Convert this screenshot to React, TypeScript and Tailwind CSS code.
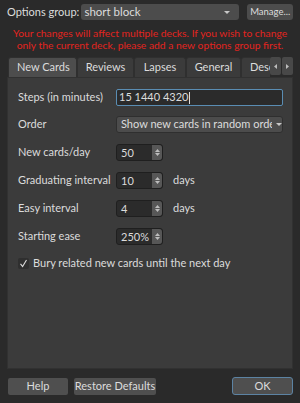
import React from 'react';

const font = { fontFamily: 'Lato, "Open Sans", sans-serif' };

const Spin: React.FC<{ value: string }> = ({ value }) => (
    <div className="flex h-[17px] w-[47px] rounded-[3px] border border-[#1f1f1f] bg-[#2b2b2b]">
        <div className="flex-1 pl-[4px] leading-[15px]">{value}</div>
        <div className="flex w-[10px] flex-col items-center justify-center gap-[1px] rounded-r-[3px] bg-[#575757]">
            <svg width="5" height="3" viewBox="0 0 5 3"><path d="M0 3 L2.5 0 L5 3Z" fill="#bdbdbd" /></svg>
            <svg width="5" height="3" viewBox="0 0 5 3"><path d="M0 0 L2.5 3 L5 0Z" fill="#bdbdbd" /></svg>
        </div>
    </div>
);

const Row: React.FC<{ label: string; children: React.ReactNode; className?: string }> = ({ label, children, className }) => (
    <div className={'flex h-[17px] items-center ' + (className ?? '')}>
        <div className="w-[98px] whitespace-nowrap">{label}</div>
        {children}
    </div>
);

const tabs = ['New Cards', 'Reviews', 'Lapses', 'General', 'Description'];
const tabWidths = ['w-[69px]', 'w-[57px]', 'w-[52px]', 'w-[55px]', 'w-[32px]'];

export default function App() {
    return (
        <div style={font} className="flex h-[403px] w-[300px] flex-col overflow-hidden whitespace-nowrap bg-[#2a2a2a] px-[7px] text-[11px] text-[#dcdcdc]">
            <div className="mt-[4px] flex h-[16px] items-center">
                <div className="w-[75px] text-[11px]">Options group:</div>
                <div className="flex h-[16px] w-[159px] items-center rounded-[3px] bg-[#4c4c4c] pl-[3px] text-[11.5px]">
                    <span className="flex-1">short block</span>
                    <svg className="mr-[9px]" width="6" height="3" viewBox="0 0 6 3"><path d="M0 0 L6 0 L3 3Z" fill="#c8c8c8" /></svg>
                </div>
                <div className="ml-[8px] flex h-[16px] w-[46px] items-center justify-center rounded-[3px] bg-[#4c4c4c] text-[9.5px]">Manage...</div>
            </div>

            <div className="mt-[7px] whitespace-normal text-center text-[10.3px] leading-[12px] text-[#e3241f]">
                Your changes will affect multiple decks. If you wish to change only the current deck, please add a new options group first.
            </div>

            <div className="mt-[6px] flex h-[20px] items-end">
                <div className="ml-[1px] flex overflow-hidden">
                    {tabs.map((t, i) => (
                        <div
                            key={t}
                            className={
                                'flex h-[20px] shrink-0 items-center overflow-hidden rounded-t-[3px] border border-b-0 border-[#2f2f2f] ' +
                                tabWidths[i] +
                                (i === 0 ? ' bg-[#4d4d4d] pl-[8px]' : i === 4 ? ' bg-[#3b3b3b] pl-[8px]' : ' bg-[#3b3b3b] justify-center')
                            }
                        >
                            {t}
                        </div>
                    ))}
                </div>
                <div className="mb-[2px] flex h-[18px] w-[11px] items-center justify-center rounded-[2px] bg-[#484848]">
                    <svg width="3" height="5" viewBox="0 0 3 5"><path d="M3 0 L0 2.5 L3 5Z" fill="#bdbdbd" /></svg>
                </div>
                <div className="mb-[2px] ml-[1px] flex h-[18px] w-[11px] items-center justify-center rounded-[2px] bg-[#484848]">
                    <svg width="3" height="5" viewBox="0 0 3 5"><path d="M0 0 L3 2.5 L0 5Z" fill="#bdbdbd" /></svg>
                </div>
            </div>

            <div className="flex h-[292px] flex-col border border-[#313131] bg-[#3b3b3b] pl-[10px] pr-[9px]">
                <Row label="Steps (in minutes)" className="mt-[11px]">
                    <div className="flex h-[17px] flex-1 items-center rounded-[2px] border border-[#5a8db3] bg-[#2b2b2b] pl-[2px]">
                        15 1440 4320<span className="ml-[1px] inline-block h-[12px] w-px bg-[#dcdcdc]" />
                    </div>
                </Row>
                <Row label="Order" className="mt-[10px]">
                    <div className="flex h-[17px] flex-1 items-center overflow-hidden rounded-[3px] border border-[#2f2f2f] bg-[#4c4c4c] pl-[4px]">
                        <span className="w-[151px] overflow-hidden">Show new cards in random order</span>
                        <svg className="ml-[4px]" width="6" height="3" viewBox="0 0 6 3"><path d="M0 0 L6 0 L3 3Z" fill="#c8c8c8" /></svg>
                    </div>
                </Row>
                <Row label="New cards/day" className="mt-[11px]">
                    <Spin value="50" />
                </Row>
                <Row label="Graduating interval" className="mt-[11px]">
                    <Spin value="10" />
                    <span className="ml-[10px]">days</span>
                </Row>
                <Row label="Easy interval" className="mt-[11px]">
                    <Spin value="4" />
                    <span className="ml-[10px]">days</span>
                </Row>
                <Row label="Starting ease" className="mt-[11px]">
                    <Spin value="250%" />
                </Row>
                <div className="mt-[10px] flex h-[17px] items-center">
                    <div className="flex h-[11px] w-[11px] items-center justify-center rounded-[2px] bg-[#2f2f2f]">
                        <svg width="9" height="9" viewBox="0 0 9 9"><path d="M1.5 4.8 L3.6 7.5 L7.5 1" fill="none" stroke="#dcdcdc" strokeWidth="1.1" /></svg>
                    </div>
                    <span className="ml-[4px]">Bury related new cards until the next day</span>
                </div>
            </div>

            <div className="mt-[8px] flex h-[18px] items-center">
                <div className="ml-[1px] flex h-[17px] w-[60px] items-center justify-center rounded-[2px] bg-[#4f4f4f]">Help</div>
                <div className="ml-[6px] flex h-[17px] w-[82px] items-center justify-center rounded-[2px] bg-[#4f4f4f]">Restore Defaults</div>
                <div className="ml-auto flex h-[18px] w-[61px] items-center justify-center rounded-[3px] border border-[#5c83a3] bg-[#4f4f4f]">OK</div>
            </div>
        </div>
    );
}
